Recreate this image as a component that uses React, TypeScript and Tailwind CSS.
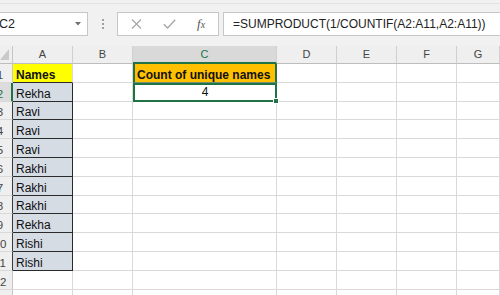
import React from "react";

const names = ["Rekha", "Ravi", "Ravi", "Ravi", "Rakhi", "Rakhi", "Rakhi", "Rekha", "Rishi", "Rishi"];
const cols = ["A", "B", "C", "D", "E", "F", "G"];

function RowHeader({ n }: { n: number }) {
  const selected = n === 2;
  const dark = n >= 3 && n <= 11;
  const border = selected
    ? "border-r-2 border-r-[#217346]"
    : dark
    ? "border-r border-r-[#3a3a3a]"
    : "border-r border-r-[#c6c6c6]";
  return (
    <div
      className={`overflow-hidden border-b border-b-[#d9d9d9] ${border} ${
        selected ? "bg-[#dcdcdc] text-[#217346]" : "bg-[#efefef] text-[#444]"
      } flex items-end`}
    >
      <div className="w-[26px] ml-[-13px] shrink-0 text-center text-[11.5px] leading-[14px]">{n}</div>
    </div>
  );
}

function Cell({ r, c }: { r: number; c: number }) {
  const base = "flex items-end text-[12px] leading-[14px] text-[#111] whitespace-nowrap";
  if (c === 0 && r === 1) {
    return (
      <div className={`${base} bg-[#ffff00] font-bold pl-[3px] border-r border-r-[#d9d9d9] border-b border-b-[#2a2a2a]`}>
        Names
      </div>
    );
  }
  if (c === 0 && r >= 2 && r <= 11) {
    return (
      <div className={`${base} bg-[#d6dce4] pl-[3px] border-r border-b border-[#2a2a2a]`}>{names[r - 2]}</div>
    );
  }
  if (c === 2 && r === 1) {
    return (
      <div className={`${base} bg-[#ffc000] font-bold pl-[2px] border-l-2 border-r-2 border-[#217346] border-b border-b-[#6f8f70]`}>
        Count of unique names
      </div>
    );
  }
  if (c === 2 && r === 2) {
    return (
      <div className={`${base} relative z-10 justify-center bg-white border-2 border-[#217346] pb-[1px]`}>
        4
        <div className="absolute -right-[4px] -bottom-[4px] w-[6px] h-[6px] bg-[#217346] border border-white" />
      </div>
    );
  }
  const rightBorder = c === 0 && r === 12 ? "border-r-[#d9d9d9]" : "border-r-[#d9d9d9]";
  return <div className={`bg-white border-r border-b border-b-[#d9d9d9] ${rightBorder}`} />;
}

export default function App() {
  const rows = Array.from({ length: 13 }, (_, i) => i + 1);
  return (
    <div className="w-[500px] h-[295px] overflow-hidden bg-white font-['Liberation_Sans',Arial,sans-serif]">
      {/* Formula bar area */}
      <div className="h-[46px] bg-[#f1f1f1] flex flex-col">
        <div className="h-[4px] border-b border-b-[#e2e2e2]" />
        <div className="mt-[8px] h-[24px] flex items-stretch">
          <div className="w-[88px] bg-white border border-[#c6c6c6] border-l-0 flex items-center justify-between pr-[6px]">
            <span className="text-[12.5px] text-[#222] ml-[-1px]">C2</span>
            <svg width="6" height="4" viewBox="0 0 6 4">
              <path d="M0 0 L6 0 L3 3.5 Z" fill="#707070" />
            </svg>
          </div>
          <div className="w-[29px] flex flex-col items-center justify-center gap-[2px]">
            <div className="w-[2px] h-[2px] bg-[#a0a0a0]" />
            <div className="w-[2px] h-[2px] bg-[#a0a0a0]" />
            <div className="w-[2px] h-[2px] bg-[#a0a0a0]" />
          </div>
          <div className="w-[102px] bg-white border border-[#c6c6c6] relative">
            <svg className="absolute left-[13px] top-[6px]" width="11" height="10" viewBox="0 0 11 10">
              <path d="M1 0.5 L10 9.5 M10 0.5 L1 9.5" stroke="#a8a8a8" strokeWidth="1.3" fill="none" />
            </svg>
            <svg className="absolute left-[45px] top-[6px]" width="13" height="10" viewBox="0 0 13 10">
              <path d="M0.8 5.2 L4.6 9 L12.2 0.8" stroke="#a8a8a8" strokeWidth="1.4" fill="none" />
            </svg>
            <span className="absolute left-[79px] top-[3px] font-['Liberation_Serif',serif] italic text-[13px] text-[#555] leading-[16px]">
              f<span className="text-[10px]">x</span>
            </span>
          </div>
          <div className="ml-[4px] flex-1 bg-white border border-[#c6c6c6] border-r-0 flex items-center pl-[9px]">
            <span className="text-[12px] text-[#222] whitespace-nowrap">=SUMPRODUCT(1/COUNTIF(A2:A11,A2:A11))</span>
          </div>
        </div>
      </div>
      {/* Sheet grid */}
      <div className="grid grid-cols-[13px_60px_60px_144px_60px_60px_60px_1fr] grid-rows-[18px_repeat(13,18.8px)]">
        <div className="bg-[#efefef] border-r border-r-[#c6c6c6] border-b border-b-[#bdbdbd] relative overflow-hidden">
          <svg className="absolute left-0 top-[3px]" width="9" height="11" viewBox="0 0 9 11">
            <path d="M9 0 L9 11 L0 11 Z" fill="#c9c9c9" />
          </svg>
        </div>
        {cols.map((c) => (
          <div
            key={c}
            className={`flex items-center justify-center text-[11px] border-r border-r-[#d0d0d0] ${
              c === "C"
                ? "bg-[#d9d9d9] text-[#217346] border-b-2 border-b-[#217346]"
                : "bg-[#efefef] text-[#444] border-b border-b-[#bdbdbd]"
            }`}
          >
            {c}
          </div>
        ))}
        {rows.map((r) => (
          <React.Fragment key={r}>
            <RowHeader n={r} />
            {cols.map((_, ci) => (
              <Cell key={ci} r={r} c={ci} />
            ))}
          </React.Fragment>
        ))}
      </div>
    </div>
  );
}
